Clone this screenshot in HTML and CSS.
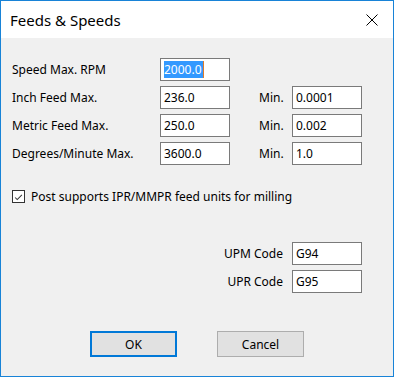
FILE: index.html
```html
<!DOCTYPE html>
<html lang="en">
<head>
    <meta charset="UTF-8">
    <meta name="viewport" content="width=device-width, initial-scale=1.0">
    <title>Feeds &amp; Speeds</title>
    <link rel="stylesheet" href="styles.css">
</head>
<body>
    <div class="window">
        <div class="titlebar">
            <span class="title">Feeds &amp; Speeds</span>
            <span class="close">
                <svg width="12" height="12" viewBox="0 0 12 12">
                    <path d="M0.5 0.5 L11.5 11.5 M11.5 0.5 L0.5 11.5" stroke="#000" stroke-width="1" fill="none"/>
                </svg>
            </span>
        </div>

        <div class="content">
            <div class="limits">
                <label class="label">Speed Max. RPM</label>
                <div class="field"><span class="selected">2000.0</span></div>

                <label class="label">Inch Feed Max.</label>
                <div class="field">236.0</div>
                <label class="label min">Min.</label>
                <div class="field">0.0001</div>

                <label class="label">Metric Feed Max.</label>
                <div class="field">250.0</div>
                <label class="label min">Min.</label>
                <div class="field">0.002</div>

                <label class="label">Degrees/Minute Max.</label>
                <div class="field">3600.0</div>
                <label class="label min">Min.</label>
                <div class="field">1.0</div>
            </div>

            <div class="check-row">
                <span class="checkbox">
                    <svg width="13" height="13" viewBox="0 0 13 13">
                        <path d="M2.5 6.5 L5 9 L10.5 3.5" stroke="#333" stroke-width="1.2" fill="none"/>
                    </svg>
                </span>
                <span class="check-label">Post supports IPR/MMPR feed units for milling</span>
            </div>

            <div class="codes">
                <label class="label">UPM Code</label>
                <div class="field">G94</div>
                <label class="label">UPR Code</label>
                <div class="field">G95</div>
            </div>

            <div class="buttons">
                <button class="btn btn-default">OK</button>
                <button class="btn">Cancel</button>
            </div>
        </div>
    </div>
</body>
</html>
```

FILE: styles.css
```css
body {
    margin: 0;
    padding: 0;
    background: #ffffff;
    font-family: 'Noto Sans', 'Open Sans', sans-serif;
    font-size: 12px;
    color: #000;
}

.window {
    width: 394px;
    height: 377px;
    box-sizing: border-box;
    border: 1px solid #1883d7;
    display: flex;
    flex-direction: column;
}

.titlebar {
    height: 37px;
    background: #ffffff;
    display: flex;
    align-items: center;
    justify-content: space-between;
    padding: 0 15px 0 9px;
}

.title {
    font-size: 15px;
    margin-top: 1px;
}

.close {
    display: flex;
    margin-top: 1px;
}

.content {
    flex: 1;
    background: #f0f0f0;
    padding: 20px 0 0 11px;
}

.limits {
    display: grid;
    grid-template-columns: 148px 70px 29px 33px 70px;
    grid-auto-rows: 23px;
    row-gap: 5px;
    align-items: center;
}

.label {
    white-space: nowrap;
}

.limits .label {
    grid-column: 1;
}

.limits .min {
    grid-column: 4;
}

.field {
    height: 23px;
    box-sizing: border-box;
    border: 1px solid #7a7a7a;
    background: #ffffff;
    padding: 0 3px;
    display: flex;
    align-items: center;
}

.selected {
    background: #3399ff;
    color: #ffffff;
    padding-right: 1px;
    border-right: 1px solid #e07b2a;
}

.check-row {
    display: flex;
    align-items: center;
    gap: 6px;
    margin-top: 25px;
    height: 13px;
}

.checkbox {
    width: 13px;
    height: 13px;
    box-sizing: border-box;
    border: 1px solid #333;
    background: #ffffff;
    display: flex;
}

.codes {
    display: grid;
    grid-template-columns: auto 70px;
    grid-auto-rows: 23px;
    column-gap: 9px;
    row-gap: 5px;
    align-items: center;
    justify-content: end;
    justify-items: end;
    margin: 39px 31px 0 0;
}

.codes .field {
    justify-self: stretch;
}

.buttons {
    display: flex;
    justify-content: center;
    gap: 40px;
    margin: 38px 11px 0 0;
}

.btn {
    width: 87px;
    height: 26px;
    box-sizing: border-box;
    border: 1px solid #adadad;
    background: #e1e1e1;
    font-family: inherit;
    font-size: 12px;
    color: #000;
    padding: 0;
}

.btn-default {
    border: 2px solid #0078d7;
}
```
